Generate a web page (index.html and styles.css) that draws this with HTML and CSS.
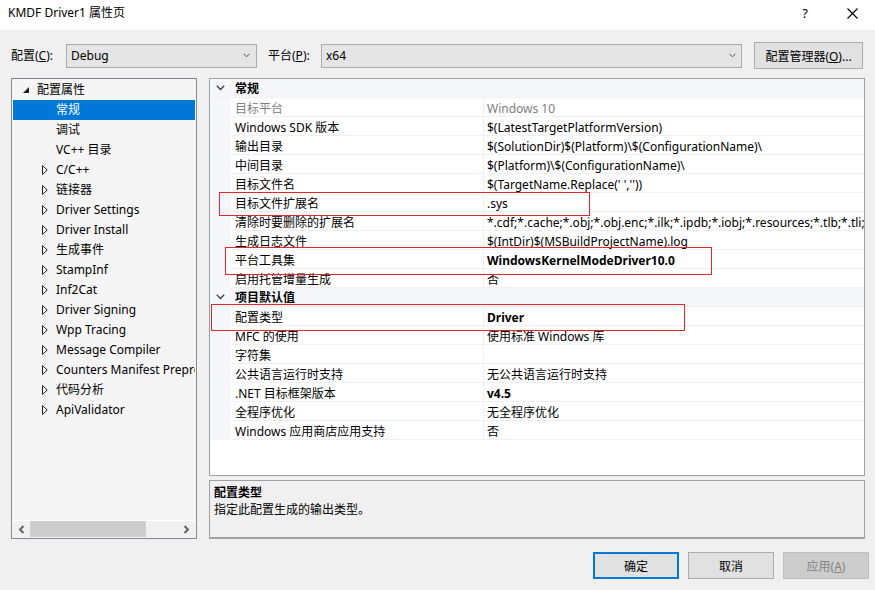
FILE: index.html
```html
<!DOCTYPE html>
<html lang="zh-CN">
<head>
<meta charset="utf-8">
<title>KMDF Driver1 属性页</title>
<link rel="stylesheet" href="styles.css">
</head>
<body>
<div class="window">
  <div class="titlebar">
    <span class="title">KMDF Driver1 属性页</span>
    <span class="tb-help">?</span>
    <svg class="tb-close" width="11" height="11" viewBox="0 0 11 11"><path d="M0.5 0.5 L10.5 10.5 M10.5 0.5 L0.5 10.5" stroke="#000" stroke-width="1.1" fill="none"/></svg>
  </div>
  <div class="client">
    <div class="toolbar">
      <span class="lbl lbl-config">配置(<u>C</u>):</span>
      <div class="combo combo-config"><span class="combo-text">Debug</span><svg class="combo-chev" width="7" height="5" viewBox="0 0 7 5"><path d="M0.5 0.8 L3.5 3.8 L6.5 0.8" stroke="#505050" fill="none"/></svg></div>
      <span class="lbl lbl-plat">平台(<u>P</u>):</span>
      <div class="combo combo-plat"><span class="combo-text">x64</span><svg class="combo-chev" width="7" height="5" viewBox="0 0 7 5"><path d="M0.5 0.8 L3.5 3.8 L6.5 0.8" stroke="#505050" fill="none"/></svg></div>
      <button class="btn btn-mgr">配置管理器(<u>O</u>)...</button>
    </div>
    <div class="main">
      <div class="tree">
        <div class="tree-items">
          <div class="ti root"><span class="exp"><svg width="6" height="6" viewBox="0 0 6 6"><polygon points="6,0 6,6 0,6" fill="#1e1e1e"/></svg></span><span class="tl">配置属性</span></div>
          <div class="ti child sel"><span class="exp"></span><span class="tl">常规</span></div>
          <div class="ti child"><span class="exp"></span><span class="tl">调试</span></div>
          <div class="ti child"><span class="exp"></span><span class="tl">VC++ 目录</span></div>
          <div class="ti child"><span class="exp"><svg class="col" width="6" height="10" viewBox="0 0 6 10"><polygon points="0.5,0.5 5.2,5 0.5,9.5" fill="none" stroke="#1e1e1e"/></svg></span><span class="tl">C/C++</span></div>
          <div class="ti child"><span class="exp"><svg class="col" width="6" height="10" viewBox="0 0 6 10"><polygon points="0.5,0.5 5.2,5 0.5,9.5" fill="none" stroke="#1e1e1e"/></svg></span><span class="tl">链接器</span></div>
          <div class="ti child"><span class="exp"><svg class="col" width="6" height="10" viewBox="0 0 6 10"><polygon points="0.5,0.5 5.2,5 0.5,9.5" fill="none" stroke="#1e1e1e"/></svg></span><span class="tl">Driver Settings</span></div>
          <div class="ti child"><span class="exp"><svg class="col" width="6" height="10" viewBox="0 0 6 10"><polygon points="0.5,0.5 5.2,5 0.5,9.5" fill="none" stroke="#1e1e1e"/></svg></span><span class="tl">Driver Install</span></div>
          <div class="ti child"><span class="exp"><svg class="col" width="6" height="10" viewBox="0 0 6 10"><polygon points="0.5,0.5 5.2,5 0.5,9.5" fill="none" stroke="#1e1e1e"/></svg></span><span class="tl">生成事件</span></div>
          <div class="ti child"><span class="exp"><svg class="col" width="6" height="10" viewBox="0 0 6 10"><polygon points="0.5,0.5 5.2,5 0.5,9.5" fill="none" stroke="#1e1e1e"/></svg></span><span class="tl">StampInf</span></div>
          <div class="ti child"><span class="exp"><svg class="col" width="6" height="10" viewBox="0 0 6 10"><polygon points="0.5,0.5 5.2,5 0.5,9.5" fill="none" stroke="#1e1e1e"/></svg></span><span class="tl">Inf2Cat</span></div>
          <div class="ti child"><span class="exp"><svg class="col" width="6" height="10" viewBox="0 0 6 10"><polygon points="0.5,0.5 5.2,5 0.5,9.5" fill="none" stroke="#1e1e1e"/></svg></span><span class="tl">Driver Signing</span></div>
          <div class="ti child"><span class="exp"><svg class="col" width="6" height="10" viewBox="0 0 6 10"><polygon points="0.5,0.5 5.2,5 0.5,9.5" fill="none" stroke="#1e1e1e"/></svg></span><span class="tl">Wpp Tracing</span></div>
          <div class="ti child"><span class="exp"><svg class="col" width="6" height="10" viewBox="0 0 6 10"><polygon points="0.5,0.5 5.2,5 0.5,9.5" fill="none" stroke="#1e1e1e"/></svg></span><span class="tl">Message Compiler</span></div>
          <div class="ti child"><span class="exp"><svg class="col" width="6" height="10" viewBox="0 0 6 10"><polygon points="0.5,0.5 5.2,5 0.5,9.5" fill="none" stroke="#1e1e1e"/></svg></span><span class="tl">Counters Manifest Preprocessor</span></div>
          <div class="ti child"><span class="exp"><svg class="col" width="6" height="10" viewBox="0 0 6 10"><polygon points="0.5,0.5 5.2,5 0.5,9.5" fill="none" stroke="#1e1e1e"/></svg></span><span class="tl">代码分析</span></div>
          <div class="ti child"><span class="exp"><svg class="col" width="6" height="10" viewBox="0 0 6 10"><polygon points="0.5,0.5 5.2,5 0.5,9.5" fill="none" stroke="#1e1e1e"/></svg></span><span class="tl">ApiValidator</span></div>
        </div>
        <div class="hscroll">
          <span class="sb-arrow"><svg width="7" height="9" viewBox="0 0 7 9"><path d="M5.5 1 L2 4.5 L5.5 8" stroke="#606060" stroke-width="2" fill="none"/></svg></span>
          <span class="sb-thumb"></span>
          <span class="sb-track"></span>
          <span class="sb-arrow"><svg width="7" height="9" viewBox="0 0 7 9"><path d="M1.5 1 L5 4.5 L1.5 8" stroke="#606060" stroke-width="2" fill="none"/></svg></span>
        </div>
      </div>
      <div class="right">
        <div class="grid">
          <div class="cat"><svg class="cat-chev" width="9" height="6" viewBox="0 0 9 6"><path d="M0.8 0.8 L4.5 4.5 L8.2 0.8" stroke="#404040" stroke-width="1.4" fill="none"/></svg><span class="cat-label">常规</span></div>
          <div class="row dim"><span class="gut"></span><span class="name">目标平台</span><span class="val">Windows 10</span></div>
          <div class="row"><span class="gut"></span><span class="name">Windows SDK 版本</span><span class="val">$(LatestTargetPlatformVersion)</span></div>
          <div class="row"><span class="gut"></span><span class="name">输出目录</span><span class="val">$(SolutionDir)$(Platform)\$(ConfigurationName)\</span></div>
          <div class="row"><span class="gut"></span><span class="name">中间目录</span><span class="val">$(Platform)\$(ConfigurationName)\</span></div>
          <div class="row"><span class="gut"></span><span class="name">目标文件名</span><span class="val">$(TargetName.Replace(' ',''))</span></div>
          <div class="row"><span class="gut"></span><span class="name">目标文件扩展名</span><span class="val">.sys</span></div>
          <div class="row"><span class="gut"></span><span class="name">清除时要删除的扩展名</span><span class="val">*.cdf;*.cache;*.obj;*.obj.enc;*.ilk;*.ipdb;*.iobj;*.resources;*.tlb;*.tli;*.tlh;*.tmp;*.rsp;*.pgc;*.pgd;*.meta;*.tlog;*.manifest;*.res;*.pch;*.exp;*.idb;*.rep;*.xdc;*.pdb</span></div>
          <div class="row"><span class="gut"></span><span class="name">生成日志文件</span><span class="val">$(IntDir)$(MSBuildProjectName).log</span></div>
          <div class="row"><span class="gut"></span><span class="name">平台工具集</span><span class="val bold">WindowsKernelModeDriver10.0</span></div>
          <div class="row"><span class="gut"></span><span class="name">启用托管增量生成</span><span class="val">否</span></div>
          <div class="cat"><svg class="cat-chev" width="9" height="6" viewBox="0 0 9 6"><path d="M0.8 0.8 L4.5 4.5 L8.2 0.8" stroke="#404040" stroke-width="1.4" fill="none"/></svg><span class="cat-label">项目默认值</span></div>
          <div class="row"><span class="gut"></span><span class="name">配置类型</span><span class="val bold">Driver</span></div>
          <div class="row"><span class="gut"></span><span class="name">MFC 的使用</span><span class="val">使用标准 Windows 库</span></div>
          <div class="row"><span class="gut"></span><span class="name">字符集</span><span class="val"></span></div>
          <div class="row"><span class="gut"></span><span class="name">公共语言运行时支持</span><span class="val">无公共语言运行时支持</span></div>
          <div class="row"><span class="gut"></span><span class="name">.NET 目标框架版本</span><span class="val bold">v4.5</span></div>
          <div class="row"><span class="gut"></span><span class="name">全程序优化</span><span class="val">无全程序优化</span></div>
          <div class="row"><span class="gut"></span><span class="name">Windows 应用商店应用支持</span><span class="val">否</span></div>
          <div class="mark mark-ext"></div>
          <div class="mark mark-tool"></div>
          <div class="mark mark-type"></div>
        </div>
        <div class="desc">
          <div class="desc-title">配置类型</div>
          <div class="desc-text">指定此配置生成的输出类型。</div>
        </div>
      </div>
    </div>
    <div class="buttons">
      <button class="btn btn-ok">确定</button>
      <button class="btn">取消</button>
      <button class="btn btn-disabled">应用(<u>A</u>)</button>
    </div>
  </div>
</div>
</body>
</html>
```
FILE: styles.css
```css
* { box-sizing: border-box; }
html, body { margin: 0; padding: 0; }
body {
  width: 875px;
  height: 590px;
  overflow: hidden;
  background: #f0f0f0;
  color: #000;
  font-family: "Noto Sans", "Noto Sans CJK SC", sans-serif;
  font-size: 12px;
}
u { text-decoration: underline; text-underline-offset: 1px; }

.window { width: 875px; height: 590px; display: flex; flex-direction: column; }

.titlebar {
  height: 30px;
  flex: none;
  background: #fff;
  display: flex;
  align-items: flex-start;
  padding-left: 8px;
}
.title { flex: 1; margin-top: 5px; line-height: 16px; }
.tb-help { width: 10px; margin-top: 5px; line-height: 16px; text-align: center; margin-right: 37px; font-size: 13px; }
.tb-close { margin-top: 8px; margin-right: 17px; }

.client { flex: 1; display: flex; flex-direction: column; }

.toolbar {
  display: flex;
  align-items: center;
  height: 27px;
  margin-top: 12px;
  padding-left: 11px;
}
.lbl { line-height: 16px; }
.lbl-config { width: 55px; }
.lbl-plat { width: 53px; margin-left: 11px; }
.combo {
  height: 24px;
  background: #e5e5e5;
  border: 1px solid #acacac;
  display: flex;
  align-items: center;
  padding-left: 4px;
}
.combo-text { flex: 1; }
.combo-config { width: 191px; padding-right: 6px; }
.combo-plat { width: 421px; padding-right: 5px; }
.btn {
  font-family: inherit;
  font-size: 12px;
  color: #000;
  background: #e1e1e1;
  border: 1px solid #adadad;
  height: 27px;
  padding: 0;
  margin: 0;
}
.btn-mgr { width: 109px; margin-left: 12px; }

.main {
  display: flex;
  margin-top: 9px;
  padding-left: 11px;
  height: 461px;
}

.tree {
  width: 186px;
  height: 461px;
  border: 1px solid #828790;
  background: #f5f5f5;
  padding: 1px;
  display: flex;
  flex-direction: column;
}
.tree-items { flex: 1; overflow: hidden; }
.ti {
  height: 20px;
  line-height: 20px;
  display: flex;
  align-items: center;
  white-space: nowrap;
  overflow: hidden;
}
.ti.child { padding-left: 19px; }
.ti.sel { background: #0078d7; color: #fff; }
.exp { width: 24px; flex: none; height: 20px; display: flex; align-items: center; padding-left: 10px; }
.ti.root .exp svg { margin-top: -1px; }
.tl { flex: none; }

.hscroll {
  height: 17px;
  flex: none;
  background: #f0f0f0;
  display: flex;
  align-items: center;
  border-top: 1px solid #fff;
}
.sb-arrow { width: 17px; height: 16px; display: flex; align-items: center; justify-content: center; flex: none; }
.sb-thumb { width: 116px; height: 16px; background: #cdcdcd; flex: none; }
.sb-track { flex: 1; }

.right { width: 656px; margin-left: 12px; display: flex; flex-direction: column; }
.grid {
  position: relative;
  height: 398px;
  border: 1px solid #a0a0a0;
  background: #fff;
  overflow: hidden;
}
.cat {
  height: 19px;
  display: flex;
  align-items: center;
  background: #f5f7fa;
  font-weight: bold;
  border-bottom: 1px solid #eef0f4;
}
.cat-chev { margin-left: 6px; flex: none; }
.cat-label { margin-left: 10px; line-height: 16px; padding-top: 1px; }
.row {
  height: 19px;
  display: flex;
  white-space: nowrap;
}
.gut { width: 21px; flex: none; background: #f5f7fa; }
.name {
  width: 253px;
  flex: none;
  padding-left: 4px;
  padding-top: 3px;
  line-height: 15px;
  border-right: 1px solid #eef0f4;
  border-bottom: 1px solid #eef0f4;
  overflow: hidden;
}
.val {
  flex: 1;
  padding-left: 3px;
  padding-top: 3px;
  line-height: 15px;
  border-bottom: 1px solid #eef0f4;
  overflow: hidden;
}
.val.bold { font-weight: bold; }
.row.dim .name, .row.dim .val { color: #808080; }

.mark { position: absolute; border: 1px solid #e5262b; }
.mark-ext { left: 9px; top: 113px; width: 371px; height: 24px; }
.mark-tool { left: 15px; top: 168px; width: 487px; height: 28px; }
.mark-type { left: 1px; top: 225px; width: 474px; height: 27px; }

.desc {
  margin-top: 4px;
  height: 59px;
  border: 1px solid #a0a0a0;
  border-bottom: 2px solid #a0a0a0;
  background: #f0f0f0;
  padding: 3px 4px 0;
}
.desc-title { font-weight: bold; line-height: 17px; }
.desc-text { line-height: 17px; }

.buttons {
  display: flex;
  justify-content: flex-end;
  gap: 9px;
  margin-top: 13px;
  padding-right: 6px;
}
.buttons .btn { width: 86px; }
.btn-ok { border: 2px solid #0078d7; }
.btn-disabled { background: #cccccc; border-color: #bfbfbf; color: #838383; }
```
